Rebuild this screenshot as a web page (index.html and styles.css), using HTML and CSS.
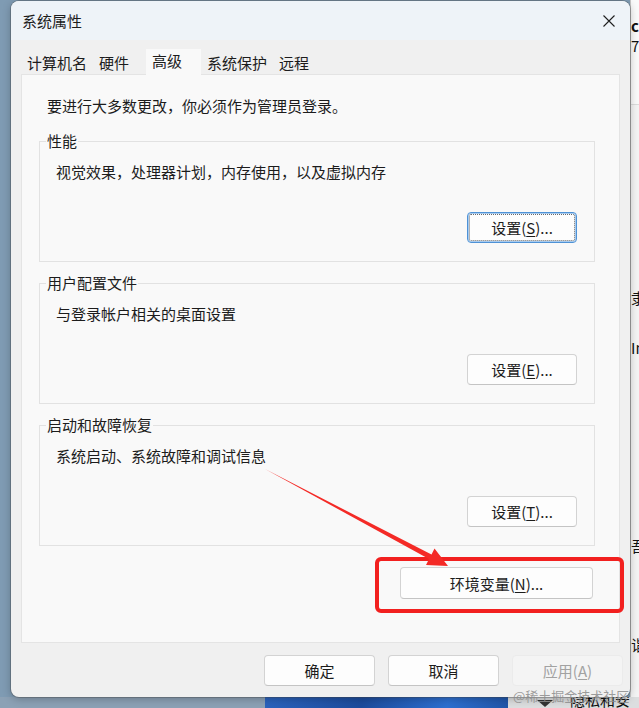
FILE: index.html
```html
<!DOCTYPE html>
<html lang="zh-CN">
<head>
    <meta charset="UTF-8">
    <meta name="viewport" content="width=device-width, initial-scale=1.0">
    <title>系统属性</title>
    <link rel="stylesheet" href="styles.css">
</head>
<body>
    <div class="screen">
        <div class="desk-left"></div>

        <div class="dialog">
            <div class="titlebar">
                <span class="title">系统属性</span>
                <button class="close" aria-label="关闭">
                    <svg width="12" height="12" viewBox="0 0 12 12">
                        <path d="M0.5 0.5 L11.5 11.5 M11.5 0.5 L0.5 11.5" stroke="#1f1f1f" stroke-width="1.1" fill="none"/>
                    </svg>
                </button>
            </div>

            <div class="tabs">
                <span class="tab">计算机名</span>
                <span class="tab">硬件</span>
                <span class="tab active">高级</span>
                <span class="tab">系统保护</span>
                <span class="tab">远程</span>
            </div>

            <div class="panel">
                <p class="notice">要进行大多数更改，你必须作为管理员登录。</p>

                <fieldset class="group">
                    <legend>性能</legend>
                    <p class="desc">视觉效果，处理器计划，内存使用，以及虚拟内存</p>
                    <div class="group-actions">
                        <button class="btn focused">设置(<u>S</u>)...</button>
                    </div>
                </fieldset>

                <fieldset class="group">
                    <legend>用户配置文件</legend>
                    <p class="desc">与登录帐户相关的桌面设置</p>
                    <div class="group-actions">
                        <button class="btn">设置(<u>E</u>)...</button>
                    </div>
                </fieldset>

                <fieldset class="group">
                    <legend>启动和故障恢复</legend>
                    <p class="desc">系统启动、系统故障和调试信息</p>
                    <div class="group-actions">
                        <button class="btn">设置(<u>T</u>)...</button>
                    </div>
                </fieldset>

                <div class="env-row">
                    <button class="btn btn-wide">环境变量(<u>N</u>)...</button>
                </div>
            </div>

            <div class="footer">
                <button class="btn">确定</button>
                <button class="btn">取消</button>
                <button class="btn" disabled>应用(<u>A</u>)</button>
            </div>
        </div>

        <div class="desk-right">
            <div class="side-top">
                <span class="frag frag-bold">cat</span>
                <span class="frag">70</span>
            </div>
            <span class="frag frag-1">隶</span>
            <span class="frag frag-2">In</span>
            <span class="frag frag-3">吾</span>
            <span class="frag frag-4">诣</span>
        </div>

        <div class="taskbar">
            <div class="wall-left"></div>
            <div class="wall-blue"></div>
            <div class="wall-right">
                <svg class="chevron" width="16" height="8" viewBox="0 0 16 8">
                    <path d="M0 0 L8 7 L16 0 Z" fill="#333"/>
                </svg>
                <span class="wall-text">隐私和安</span>
            </div>
        </div>

        <!-- annotation drawn over the screenshot -->
        <svg class="annotation" width="639" height="708" viewBox="0 0 639 708">
            <rect x="377" y="559" width="245" height="52" rx="4" fill="none" stroke="#f2201f" stroke-width="4"/>
            <polygon points="265,469 431.5,554.5 434.5,548.5 448,566 426,565 429,559" fill="#f42a26"/>
        </svg>

        <span class="watermark">@稀土掘金技术社区</span>
    </div>
</body>
</html>
```

FILE: styles.css
```css
:root {
    --text: #1c1c1c;
    --text-disabled: #a2a2a2;
    --dialog-bg: #f0f0f0;
    --title-bg: #eef3f8;
    --panel-bg: #f9f9f9;
    --panel-border: #e4e4e4;
    --group-border: #e2e2e2;
    --btn-bg: #fdfdfd;
    --btn-border: #d3d3d3;
    --focus: #4e92d6;
    --desk: #7f9bb3;
}

* {
    margin: 0;
    padding: 0;
    box-sizing: border-box;
}

body {
    font-family: "Noto Sans CJK SC", "Noto Sans", sans-serif;
    font-size: 15px;
    color: var(--text);
    background: var(--desk);
}

.screen {
    position: relative;
    width: 639px;
    height: 708px;
    overflow: hidden;
    display: grid;
    grid-template-columns: 11px 619px 9px;
    grid-template-rows: 697px 11px;
    background: var(--desk);
}

.desk-left {
    background: var(--desk);
}

/* dialog */
.dialog {
    position: relative;
    z-index: 1;
    display: flex;
    flex-direction: column;
    margin-top: 1px;
    background: var(--dialog-bg);
    border-radius: 8px;
    overflow: hidden;
    box-shadow: 0 0 0 1px rgba(70, 70, 70, 0.35), 0 2px 8px rgba(0, 0, 0, 0.25);
}

.titlebar {
    height: 39px;
    display: flex;
    align-items: center;
    justify-content: space-between;
    padding-left: 11px;
    background: var(--title-bg);
}

.title {
    line-height: 20px;
}

.close {
    width: 40px;
    height: 39px;
    margin-right: 1px;
    border: none;
    background: transparent;
    display: flex;
    align-items: center;
    justify-content: center;
}

.tabs {
    height: 34px;
    display: flex;
    align-items: flex-end;
    padding-left: 10px;
}

.tab {
    padding: 0 6px;
    line-height: 20px;
    margin-bottom: 1px;
}

.tab.active {
    position: relative;
    width: 55px;
    height: 26px;
    margin-left: 11px;
    margin-bottom: -1px;
    padding-top: 2px;
    background: var(--panel-bg);
}

.panel {
    height: 569px;
    margin: 0 10px;
    padding: 21px 24px 0 17px;
    background: var(--panel-bg);
    border: 1px solid var(--panel-border);
}

.notice {
    line-height: 20px;
    padding-left: 8px;
    margin-bottom: 15px;
}

.group {
    border: 1px solid var(--group-border);
    padding: 0 17px 18px 16px;
    margin-bottom: 11px;
    min-width: 0;
}

.group legend {
    line-height: 20px;
    padding: 0 1px;
    margin-left: -10px;
}

.desc {
    line-height: 20px;
    margin-top: 11px;
}

.group-actions {
    display: flex;
    justify-content: flex-end;
    margin-top: 30px;
}

.env-row {
    display: flex;
    justify-content: flex-end;
    margin-top: 21px;
    margin-right: 2px;
}

/* buttons */
.btn {
    width: 110px;
    height: 31px;
    font-family: inherit;
    font-size: 15px;
    color: var(--text);
    background: var(--btn-bg);
    border: 1px solid var(--btn-border);
    border-bottom-color: #c4c4c4;
    border-radius: 4px;
}

.btn u {
    text-underline-offset: 2px;
}

.btn.focused {
    border-color: var(--focus);
    box-shadow: inset 0 0 0 1px #a9cbee;
    outline: 1px dotted #6a6a6a;
    outline-offset: -3px;
}

.btn-wide {
    width: 193px;
    height: 32px;
}

.btn:disabled {
    color: var(--text-disabled);
    background: #f4f4f4;
    border-color: #ebebeb;
}

.footer {
    flex: 1;
    display: flex;
    justify-content: flex-end;
    gap: 13px;
    padding: 12px 7px 0 0;
}

.footer .btn {
    width: 111px;
}

/* background window on the right */
.desk-right {
    display: flex;
    flex-direction: column;
    overflow: hidden;
    white-space: nowrap;
    background: #f4f4f4;
    border-left: 1px solid #c8c8c8;
    font-size: 15px;
    line-height: 16px;
    color: #111;
}

.side-top {
    height: 105px;
    display: flex;
    flex-direction: column;
    gap: 4px;
    padding-top: 18px;
    background: #fafafa;
    border-bottom: 1px solid #dcdcdc;
}

.frag-bold {
    font-weight: 700;
}

.frag-1 { margin-top: 185px; }
.frag-2 { margin-top: 34px; }
.frag-3 { margin-top: 182px; }
.frag-4 { margin-top: 83px; }

/* desktop strip below the dialog */
.taskbar {
    grid-column: 1 / -1;
    display: flex;
}

.wall-left {
    width: 265px;
    background: #8ca1b5;
}

.wall-blue {
    width: 243px;
    background: linear-gradient(100deg, #2b63bd 0%, #1c4b9c 40%, #2d6fd0 75%, #1f55a8 100%);
}

.wall-right {
    flex: 1;
    display: flex;
    align-items: flex-start;
    overflow: hidden;
    background: #dcdedf;
}

.chevron {
    margin: 3px 0 0 29px;
}

.wall-text {
    margin-left: 17px;
    margin-top: -5px;
    font-size: 15px;
    line-height: 16px;
    color: #111;
    white-space: nowrap;
}

/* overlays */
.annotation {
    position: absolute;
    left: 0;
    top: 0;
    z-index: 2;
    pointer-events: none;
}

.watermark {
    position: absolute;
    left: 513px;
    top: 688px;
    z-index: 3;
    font-size: 13px;
    line-height: 16px;
    color: rgba(140, 140, 140, 0.85);
    white-space: nowrap;
}
```
